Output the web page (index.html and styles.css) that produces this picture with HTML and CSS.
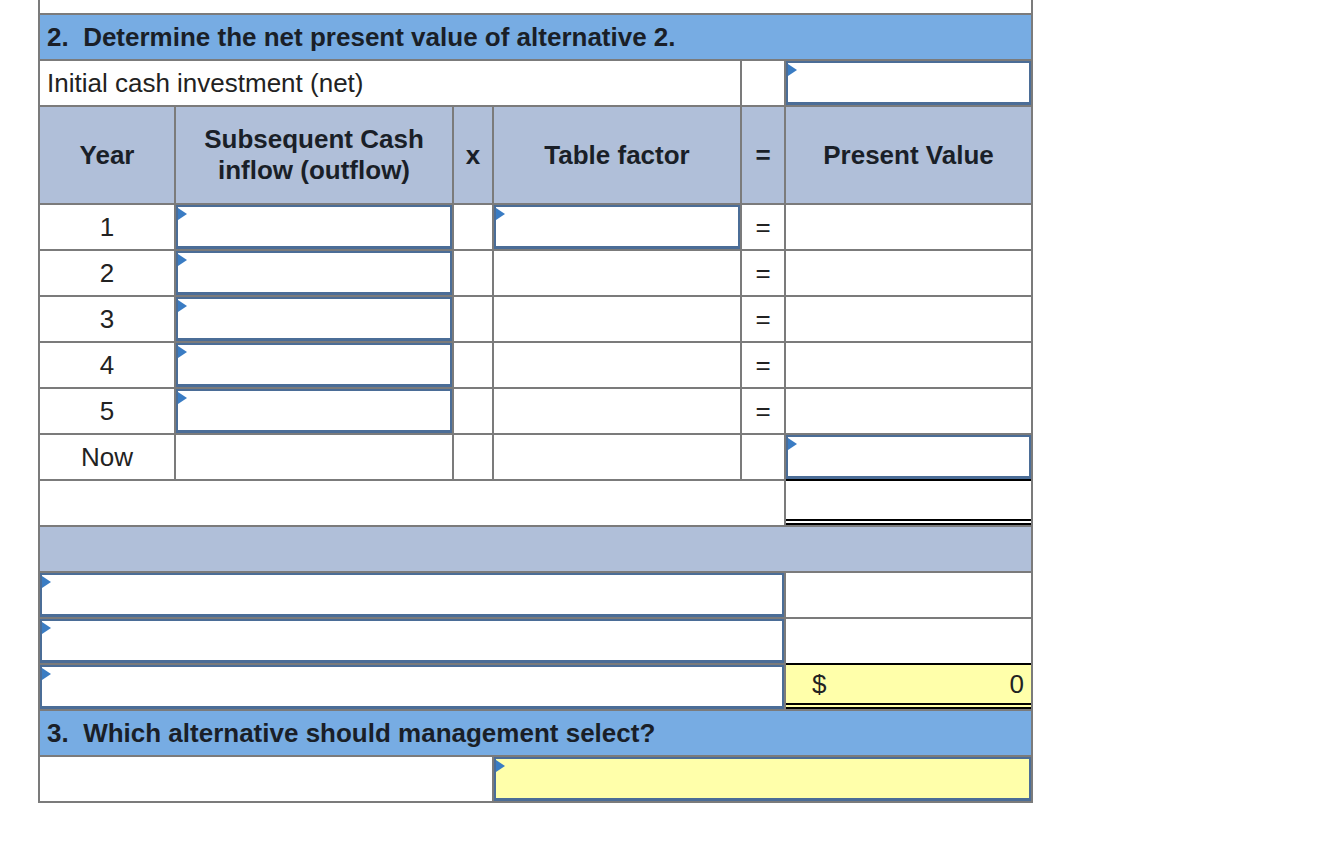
FILE: index.html
```html
<!DOCTYPE html>
<html lang="en">
<head>
<meta charset="utf-8">
<title>Net present value worksheet</title>
<link rel="stylesheet" href="styles.css">
</head>
<body>
<div class="sheet">
  <div class="full"></div>

  <div class="full sec">2.&nbsp; Determine the net present value of alternative 2.</div>

  <div class="span4 lbl">Initial cash investment (net)</div>
  <div></div>
  <div class="inp"></div>

  <div class="hd">Year</div>
  <div class="hd">Subsequent Cash<br>inflow (outflow)</div>
  <div class="hd">x</div>
  <div class="hd">Table factor</div>
  <div class="hd">=</div>
  <div class="hd">Present Value</div>

  <div class="c">1</div>
  <div class="inp"></div>
  <div></div>
  <div class="inp"></div>
  <div class="c">=</div>
  <div></div>

  <div class="c">2</div>
  <div class="inp"></div>
  <div></div>
  <div></div>
  <div class="c">=</div>
  <div></div>

  <div class="c">3</div>
  <div class="inp"></div>
  <div></div>
  <div></div>
  <div class="c">=</div>
  <div></div>

  <div class="c">4</div>
  <div class="inp"></div>
  <div></div>
  <div></div>
  <div class="c">=</div>
  <div></div>

  <div class="c">5</div>
  <div class="inp"></div>
  <div></div>
  <div></div>
  <div class="c">=</div>
  <div></div>

  <div class="c">Now</div>
  <div></div>
  <div></div>
  <div></div>
  <div></div>
  <div class="inp"></div>

  <div class="span5"></div>
  <div class="tot"></div>

  <div class="full band"></div>

  <div class="span5 inp"></div>
  <div></div>

  <div class="span5 inp"></div>
  <div></div>

  <div class="span5 inp"></div>
  <div class="tot yel money"><span>$</span><span>0</span></div>

  <div class="full sec">3.&nbsp; Which alternative should management select?</div>

  <div class="span3"></div>
  <div class="span3 inp yel"></div>
</div>
</body>
</html>
```

FILE: styles.css
```css
html, body {
  margin: 0;
  background: #ffffff;
}

body {
  font-family: "Liberation Sans", Arial, sans-serif;
  color: #222222;
}

.sheet {
  display: grid;
  grid-template-columns: 134px 276px 38px 246px 42px 245px;
  grid-template-rows: 13px 44px 44px 96px repeat(13, 44px);
  gap: 2px;
  padding: 0 2px 2px 2px;
  width: max-content;
  margin-left: 38px;
  background: #7b7b7b;
  font-size: 26px;
  line-height: 1.18;
}

.sheet > div {
  background: #ffffff;
  display: flex;
  align-items: center;
  min-width: 0;
}

.full { grid-column: 1 / -1; }
.span3 { grid-column: span 3; }
.span4 { grid-column: span 4; }
.span5 { grid-column: span 5; }

.sheet > .sec {
  background: #77ace3;
  font-weight: bold;
  color: #1a1f28;
  padding-left: 7px;
}

.lbl {
  padding-left: 7px;
}

.sheet > .hd {
  background: #b0bfd9;
  font-weight: bold;
  color: #1a1f28;
  justify-content: center;
  text-align: center;
}

.c {
  justify-content: center;
}

.sheet > .band {
  background: #b0bfd9;
}

.sheet > .inp {
  border: 2px solid #4b6d97;
  border-bottom-width: 3px;
  position: relative;
}

.inp::before {
  content: "";
  position: absolute;
  left: 0;
  top: 1px;
  border-left: 9px solid #3a7cc3;
  border-top: 6px solid transparent;
  border-bottom: 6px solid transparent;
}

.sheet > .tot {
  margin-top: -2px;
  border-top: 2px solid #000000;
  border-bottom: 6px double #000000;
}

.sheet > .yel {
  background: #ffffaa;
}

.money {
  justify-content: space-between;
  padding: 0 7px 0 26px;
}
```
